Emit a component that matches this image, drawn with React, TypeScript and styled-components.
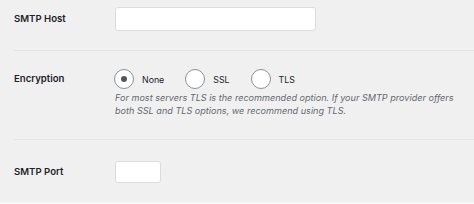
import React, { useState } from "react";
import styled, { createGlobalStyle } from "styled-components";

const GlobalStyle = createGlobalStyle`
  html, body {
    margin: 0;
    padding: 0;
    background: #f0f0f1;
  }
  body {
    font-family: Inter, "Liberation Sans", Arial, sans-serif;
    color: #1d2327;
  }
`;

const Page = styled.div`
  width: 474px;
  height: 204px;
  overflow: hidden;
  background: #f0f0f1;
  border-bottom: 2px solid #f7f7f8;
  box-sizing: border-box;
`;

const Table = styled.div`
  margin-left: 14px;
  display: flex;
  flex-direction: column;
`;

const Row = styled.div<{ $top: number; $bottom: number; $last?: boolean }>`
  display: flex;
  align-items: flex-start;
  padding-top: ${({ $top }) => $top}px;
  padding-bottom: ${({ $bottom }) => $bottom}px;
  border-bottom: ${({ $last }) => ($last ? "none" : "1px solid #e4e4e7")};
`;

const Label = styled.div<{ $h: number }>`
  width: 101px;
  flex-shrink: 0;
  height: ${({ $h }) => $h}px;
  line-height: ${({ $h }) => $h}px;
  font-size: 9.6px;
  font-weight: 600;
  color: #1d2327;
`;

const Field = styled.div`
  display: flex;
  flex-direction: column;
`;

const TextInput = styled.input<{ $w: number; $h: number }>`
  width: ${({ $w }) => $w}px;
  height: ${({ $h }) => $h}px;
  box-sizing: border-box;
  border: 1px solid #dcdcde;
  border-radius: 3px;
  background: #fff;
  padding: 0 6px;
  font-family: inherit;
  font-size: 10px;
  outline: none;
`;

const RadioGroup = styled.div`
  display: flex;
  align-items: center;
  gap: 21px;
  height: 20px;
  margin-left: -1px;
`;

const RadioOption = styled.label`
  display: flex;
  align-items: center;
  gap: 8px;
  font-size: 8.8px;
  color: #1d2327;
  cursor: pointer;
`;

const Circle = styled.span<{ $on: boolean }>`
  width: 20px;
  height: 20px;
  box-sizing: border-box;
  border: 1px solid #8c8f94;
  border-radius: 50%;
  background: #fff;
  display: flex;
  align-items: center;
  justify-content: center;

  &::after {
    content: "";
    width: 6px;
    height: 6px;
    border-radius: 50%;
    background: #50575e;
    display: ${({ $on }) => ($on ? "block" : "none")};
  }
`;

const Description = styled.p`
  margin: 2px 0 0;
  width: 352px;
  font-size: 9.1px;
  line-height: 13px;
  font-style: italic;
  color: #646970;
`;

export default function App() {
  const [enc, setEnc] = useState("none");
  const options = [
    { id: "none", label: "None" },
    { id: "ssl", label: "SSL" },
    { id: "tls", label: "TLS" },
  ];

  return (
    <>
      <GlobalStyle />
      <Page>
        <Table>
          <Row $top={7} $bottom={19}>
            <Label $h={24}>SMTP Host</Label>
            <Field>
              <TextInput $w={201} $h={24} />
            </Field>
          </Row>
          <Row $top={18} $bottom={22}>
            <Label $h={20}>Encryption</Label>
            <Field>
              <RadioGroup>
                {options.map((o) => (
                  <RadioOption key={o.id} onClick={() => setEnc(o.id)}>
                    <Circle $on={enc === o.id} />
                    {o.label}
                  </RadioOption>
                ))}
              </RadioGroup>
              <Description>
                For most servers TLS is the recommended option. If your SMTP provider offers
                both SSL and TLS options, we recommend using TLS.
              </Description>
            </Field>
          </Row>
          <Row $top={21} $bottom={19} $last>
            <Label $h={22}>SMTP Port</Label>
            <Field>
              <TextInput $w={46} $h={22} />
            </Field>
          </Row>
        </Table>
      </Page>
    </>
  );
}
